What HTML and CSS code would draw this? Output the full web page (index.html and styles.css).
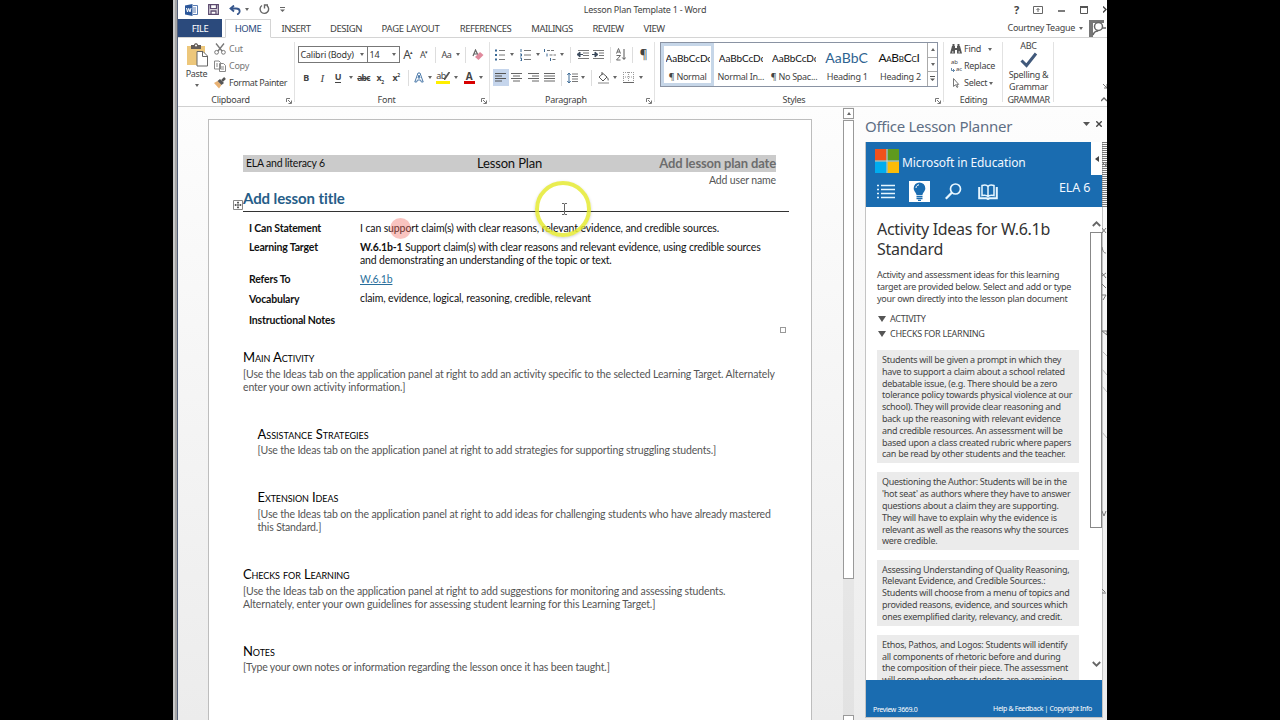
FILE: index.html
```html
<!DOCTYPE html>
<html lang="en">
<head>
  <meta charset="UTF-8">
  <title>Lesson Plan Template 1 - Word</title>
  <link rel="stylesheet" href="styles.css">
</head>
<body>
<div class="window">

  <!-- Title bar -->
  <div class="titlebar">
    <div class="quick">
      <svg width="13" height="12" viewBox="0 0 13 12"><path d="M0 1.5 7.5 0v12L0 10.5z" fill="#2b579a"/><path d="M1.5 4l1 4 1.2-3.6L5 8l1-4" fill="none" stroke="#fff"/><path d="M8 1.5h4.5v9H8M8 4h3M8 6h3M8 8h3" fill="none" stroke="#5a7db3"/></svg>
      <svg width="11" height="11" viewBox="0 0 11 11"><path d="M.7.7h9.6v9.6H.7zM2.5.7v4h6v-4M3 10V7h5v3" fill="none" stroke="#5b4a6e" stroke-width="1.3"/></svg>
      <svg width="12" height="10" viewBox="0 0 12 10"><path d="M5 .5 1.5 3.5 5 6.5M2 3.5h5c5 0 4.500 5 1 6" fill="none" stroke="#36568c" stroke-width="1.8"/></svg>
      <i class="caret"></i>
      <svg width="11" height="11" viewBox="0 0 11 11"><path d="M3 1.500a4.300 4.300 0 1 0 5 .2M5.500 4.500V1H9" fill="none" stroke="#666" stroke-width="1.400"/></svg>
      <svg width="5" height="6" viewBox="0 0 5 6"><path d="M0 .5h5" stroke="#666"/><path d="M0 2.500h5L2.500 5z" fill="#666"/></svg>
    </div>
    <div class="title">Lesson Plan Template 1 - Word</div>
    <div class="controls">
      <b>?</b>
      <svg width="10" height="8" viewBox="0 0 10 8"><path d="M.5.5h9v7h-9zM5 6V2.500M3.500 4 5 2.500 6.500 4" fill="none" stroke="#666"/></svg>
      <svg width="7" height="8" viewBox="0 0 7 8"><path d="M0 5h7" stroke="#444" stroke-width="1.400"/></svg>
      <svg width="8" height="8" viewBox="0 0 8 8"><path d="M.5.5h7v7h-7z" fill="none" stroke="#555"/><path d="M0 1h8" stroke="#555" stroke-width="2"/></svg>
      <svg width="4" height="7" viewBox="0 0 4 7"><path d="M0 .5 3 3.500 0 6.500" fill="none" stroke="#444" stroke-width="1.400"/></svg>
    </div>
  </div>

  <!-- Tabs -->
  <div class="tabs">
    <span class="file">FILE</span>
    <span class="active">HOME</span>
    <span>INSERT</span>
    <span>DESIGN</span>
    <span class="wide">PAGE LAYOUT</span>
    <span>REFERENCES</span>
    <span>MAILINGS</span>
    <span>REVIEW</span>
    <span>VIEW</span>
    <div class="user">Courtney Teague <i class="caret"></i>
      <svg width="18" height="17" viewBox="0 0 18 17"><path d="M0 0h15v3H4v14H0z" fill="#777"/><circle cx="9.500" cy="6.500" r="4" fill="#fff" stroke="#666" stroke-width="1.500"/><path d="M4 15c1-3 2-4 5-4M13 8h4" fill="none" stroke="#666" stroke-width="1.500"/></svg>
    </div>
  </div>

  <!-- Ribbon -->
  <div class="ribbon">
    <div class="group clipboard">
      <div class="group-body">
        <div class="paste">
          <svg width="22" height="24" viewBox="0 0 22 24"><path d="M1 3h18v19H1z" fill="#edc77b"/><path d="M5 2h3c0-2.500 4-2.500 4 0h3v4H5z" fill="#635c58"/><circle cx="10" cy="2.500" r="1" fill="#fff"/><path d="M11 8.500h6l4.500 4.500v10H11z" fill="#fff" stroke="#666"/><path d="M16.500 9v4.500H21" fill="none" stroke="#666"/></svg>
          <span>Paste</span>
          <i class="caret"></i>
        </div>
        <div class="clip-list">
          <div class="dim"><svg width="12" height="12" viewBox="0 0 12 12"><path d="M2 .5 8 8M10 .5 4 8" stroke="#777" stroke-width="1.300"/><circle cx="2.600" cy="9.300" r="1.900" fill="none" stroke="#777"/><circle cx="9.400" cy="9.300" r="1.900" fill="none" stroke="#777"/></svg>Cut</div>
          <div class="dim"><svg width="12" height="12" viewBox="0 0 12 12"><path d="M.5 1h4.500l1.500 1.500V9H.5zM5.500 3.500h4l2 2V11.500h-6zM2 4h2M2 6h2M7 7h3M7 9h3" fill="#fff" stroke="#888"/></svg>Copy</div>
          <div class="painter"><svg width="12" height="12" viewBox="0 0 12 12"><path d="M0 6 3.500 4l4 4L5 11.500z" fill="#e8b172"/><path d="M3.500 4 6 2l4 4-2.500 2z" fill="#555"/><path d="M8 4l3-3" stroke="#555" stroke-width="2.500"/></svg>Format Painter</div>
        </div>
      </div>
      <div class="label">Clipboard<svg class="launch" width="6" height="6" viewBox="0 0 6 6"><path d="M.5 4V.5H4M2 2l3 3M5.500 2.500v3h-3" fill="none" stroke="#777"/></svg></div>
    </div>

    <div class="group font">
      <div class="group-body rows">
        <div class="cells font-top">
          <div class="combo">Calibri (Body)<i class="caret"></i></div>
          <div class="combo">14<i class="caret"></i></div>
          <span class="big">A<sup>▴</sup></span>
          <span>A<sup>▾</sup></span>
          <i class="bar"></i>
          <span>Aa</span>
          <i class="caret"></i>
          <i class="bar"></i>
          <svg width="12" height="12" viewBox="0 0 12 12"><path d="M1 7 3.500 1 6 6M2 5h3" fill="none" stroke="#666" stroke-width="1.200"/><path d="M3 8 8 3l3.500 3L6.500 11z" fill="#e08a9d"/></svg>
        </div>
        <div class="cells font-bottom">
          <b>B</b>
          <i class="serif">I</i>
          <b class="under">U</b>
          <i class="caret"></i>
          <b class="strike">abc</b>
          <b>x<sub>2</sub></b>
          <b>x<sup>2</sup></b>
          <i class="bar"></i>
          <svg width="10" height="11" viewBox="0 0 10 11"><path d="M.8 10 4 1h2l3.200 9H7.300l-.7-2H3.400l-.7 2zM4 6h2L5 3z" fill="#fff" stroke="#4a78a8"/></svg>
          <i class="caret"></i>
          <span class="mark">ab<svg width="6" height="8" viewBox="0 0 6 8"><path d="M0 8 5.500 0" stroke="#555" stroke-width="1.800"/></svg></span>
          <i class="caret"></i>
          <b class="ink">A</b>
          <i class="caret"></i>
        </div>
      </div>
      <div class="label">Font<svg class="launch" width="6" height="6" viewBox="0 0 6 6"><path d="M.5 4V.5H4M2 2l3 3M5.500 2.500v3h-3" fill="none" stroke="#777"/></svg></div>
    </div>

    <div class="group para">
      <div class="group-body rows">
        <div class="cells para-top">
          <svg width="10" height="12" viewBox="0 0 10 12"><path d="M0 1.500h2M0 6h2M0 10.500h2" stroke="#3c6a96" stroke-width="2"/><path d="M4 1.500h6M4 6h6M4 10.500h6" stroke="#777"/></svg>
          <i class="caret"></i>
          <svg width="11" height="12" viewBox="0 0 11 12"><path d="M1 0v3M0 5h1.500v2H0M0 9h1.500v3H0" fill="none" stroke="#3c6a96"/><path d="M4 1.500h7M4 6h7M4 10.500h7" stroke="#777"/></svg>
          <i class="caret"></i>
          <svg width="13" height="12" viewBox="0 0 13 12"><path d="M.5 0v3M3 4.500v3M6.500 9v3" stroke="#3c6a96"/><path d="M3 1.500h8M5.500 6H12M8.500 10.500H12" stroke="#777" stroke-dasharray="3 1"/></svg>
          <i class="caret"></i>
          <i class="bar"></i>
          <svg width="12" height="9" viewBox="0 0 12 9"><path d="M1 .5h11M6 3h6M6 5.500h6M1 8.500h11" stroke="#777"/><path d="M0 4.500 3 2v5zM2 4.500h4" fill="#3b4a5c" stroke="#3b4a5c"/></svg>
          <svg width="12" height="9" viewBox="0 0 12 9"><path d="M1 .5h11M7 3h5M7 5.500h5M1 8.500h11" stroke="#777"/><path d="M6 4.500 3 2v5zM0 4.500h4" fill="#3b4a5c" stroke="#3b4a5c"/></svg>
          <i class="bar"></i>
          <svg width="10" height="13" viewBox="0 0 10 13"><path d="M.5 5.500 2.500.5l2 5M1.200 4h2.600M.5 7.500h4l-4 4.500h4" fill="none" stroke="#666"/><path d="M8 1v10M6.300 9.500 8 11.500l1.700-2" fill="none" stroke="#555"/></svg>
          <i class="bar"></i>
          <span class="big">¶</span>
        </div>
        <div class="cells para-bottom">
          <i class="on"><svg width="11" height="9" viewBox="0 0 11 9"><path d="M0 .5h11M0 3h7M0 5.500h11M0 8h7" stroke="#555"/></svg></i>
          <svg width="11" height="9" viewBox="0 0 11 9"><path d="M0 .5h11M2 3h7M0 5.500h11M2 8h7" stroke="#666"/></svg>
          <svg width="11" height="9" viewBox="0 0 11 9"><path d="M0 .5h11M4 3h7M0 5.500h11M4 8h7" stroke="#666"/></svg>
          <svg width="11" height="9" viewBox="0 0 11 9"><path d="M0 .5h11M0 3h11M0 5.500h11M0 8h11" stroke="#666"/></svg>
          <i class="bar"></i>
          <svg width="11" height="12" viewBox="0 0 11 12"><path d="M2 1v10M.3 3 2 1l1.700 2M.3 9 2 11l1.700-2" fill="none" stroke="#3c6a96"/><path d="M5 2h6M5 4.500h6M5 7h6M5 9.500h6" stroke="#777"/></svg>
          <i class="caret"></i>
          <i class="bar"></i>
          <svg width="13" height="12" viewBox="0 0 13 12"><path d="M2 5 6 1.500 10 5 6 9zM5 0v3" fill="none" stroke="#555"/><path d="M10 5c2 1 2 3 1 4z" fill="#555"/><path d="M1 11h11" stroke="#888"/></svg>
          <i class="caret"></i>
          <svg width="11" height="11" viewBox="0 0 11 11"><path d="M.5 0v10M5.500 0v10M10.500 0v10M0 .5h11M0 5h11" stroke="#999" stroke-dasharray="1 1"/><path d="M0 10.500h11" stroke="#666"/></svg>
          <i class="caret"></i>
        </div>
      </div>
      <div class="label">Paragraph<svg class="launch" width="6" height="6" viewBox="0 0 6 6"><path d="M.5 4V.5H4M2 2l3 3M5.500 2.500v3h-3" fill="none" stroke="#777"/></svg></div>
    </div>

    <div class="group styles">
      <div class="group-body">
        <div class="gallery">
          <div class="style selected"><span class="sample">AaBbCcDc</span><span>¶ Normal</span></div>
          <div class="style"><span class="sample">AaBbCcDc</span><span>Normal In...</span></div>
          <div class="style"><span class="sample">AaBbCcDc</span><span>¶ No Spac...</span></div>
          <div class="style"><span class="sample h1">AaBbC</span><span>Heading 1</span></div>
          <div class="style"><span class="sample h2">AaBbCcI</span><span>Heading 2</span></div>
          <div class="gallery-scroll">
            <span><i class="caret up"></i></span>
            <span><i class="caret"></i></span>
            <span><svg width="5" height="6" viewBox="0 0 5 6"><path d="M0 .5h5" stroke="#555"/><path d="M0 2.500h5L2.500 5z" fill="#555"/></svg></span>
          </div>
        </div>
      </div>
      <div class="label">Styles<svg class="launch" width="6" height="6" viewBox="0 0 6 6"><path d="M.5 4V.5H4M2 2l3 3M5.500 2.500v3h-3" fill="none" stroke="#777"/></svg></div>
    </div>

    <div class="group editing">
      <div class="group-body">
        <div class="edit-list">
          <div><svg width="12" height="10" viewBox="0 0 12 10"><path d="M0 9.500 2 2h3v7.500zM7 9.500V2h3l2 7.500zM2.500 0h2v2h-2zM7.500 0h2v2h-2zM5 4h2v2H5z" fill="#555"/><path d="M2 8h1.500M8.500 8H10" stroke="#fff"/></svg>Find <i class="caret"></i></div>
          <div class="replace"><span class="swap"><span>ab</span><span><svg width="4" height="4" viewBox="0 0 4 4"><path d="M.5 0v2.500h3M2 1l1.500 1.500L2 4" fill="none" stroke="#3c6a96" stroke-width=".8"/></svg>ac</span></span>Replace</div>
          <div class="select"><svg width="12" height="10" viewBox="0 0 12 10"><path d="M3.500.5v8l2-1.800L7 9.500l1-.6-1.300-2.500h2z" fill="#fff" stroke="#777"/></svg>Select<i class="caret"></i></div>
        </div>
      </div>
      <div class="label">Editing</div>
    </div>

    <div class="group grammar">
      <div class="group-body">
        <div class="spell">
          <span>ABC</span>
          <svg width="18" height="16" viewBox="0 0 18 16"><path d="M1.500 8.500 6.500 13.500 16 1.500" fill="none" stroke="#41597b" stroke-width="3"/></svg>
          <span>Spelling &amp;<br>Grammar</span>
        </div>
      </div>
      <div class="label">GRAMMAR</div>
    </div>
    <div class="ribbon-end">
      <svg width="4" height="6" viewBox="0 0 4 6"><path d="M0 1l4 4M4 1v4H1" fill="none" stroke="#777"/></svg>
      <svg width="6" height="5" viewBox="0 0 6 5"><path d="M0 4 3 1l3 3" fill="none" stroke="#666" stroke-width="1.300"/></svg>
    </div>
  </div>

  <!-- Workspace -->
  <div class="workspace">
    <div class="canvas">
      <div class="page">
        <div class="page-head">
          <span class="subject">ELA and literacy 6</span>
          <span class="doc-name">Lesson Plan</span>
          <span class="doc-date">Add lesson plan date</span>
        </div>
        <div class="user-name">Add user name</div>
        <div class="lesson-title">Add lesson title
          <svg class="move" width="10" height="10" viewBox="0 0 10 10"><path d="M.5.5h9v9h-9z" fill="#fff" stroke="#888"/><path d="M5 1.500v7M1.500 5h7M4 2.500h2M4 7.500h2M2.500 4v2M7.500 4v2" stroke="#444" stroke-width=".8"/></svg>
        </div>
        <dl class="facts">
          <dt>I Can Statement</dt><dd class="loose">I can su<span class="click">pp</span>ort claim(s) with clear reasons, relevant evidence, and credible sources.</dd>
          <dt>Learning Target</dt><dd><b>W.6.1b-1</b> Support claim(s) with clear reasons and relevant evidence, using credible sources<br>and demonstrating an understanding of the topic or text.</dd>
          <dt>Refers To</dt><dd><a href="#">W.6.1b</a></dd>
          <dt>Vocabulary</dt><dd class="loose">claim, evidence, logical, reasoning, credible, relevant</dd>
          <dt class="last">Instructional Notes</dt><dd></dd>
        </dl>
        <div class="resize"></div>

        <section>
          <h2>Main Activity</h2>
          <p>[Use the Ideas tab on the application panel at right to add an activity specific to the selected Learning Target. Alternately<br>enter your own activity information.]</p>
        </section>
        <section class="indent assist">
          <h2>Assistance Strategies</h2>
          <p>[Use the Ideas tab on the application panel at right to add strategies for supporting struggling students.]</p>
        </section>
        <section class="indent">
          <h2>Extension Ideas</h2>
          <p>[Use the Ideas tab on the application panel at right to add ideas for challenging students who have already mastered<br>this Standard.]</p>
        </section>
        <section>
          <h2>Checks for Learning</h2>
          <p>[Use the Ideas tab on the application panel at right to add suggestions for monitoring and assessing students.<br>Alternately, enter your own guidelines for assessing student learning for this Learning Target.]</p>
        </section>
        <section class="notes">
          <h2>Notes</h2>
          <p>[Type your own notes or information regarding the lesson once it has been taught.]</p>
        </section>
      </div>
    </div>

    <div class="scrollbar">
      <span class="arrow"><i class="caret up"></i></span>
      <span class="thumb"></span>
      <span class="arrow end"></span>
    </div>

    <!-- Task pane -->
    <div class="pane">
      <div class="pane-title">
        <span>Office Lesson Planner</span>
        <svg width="7" height="4" viewBox="0 0 7 4"><path d="M0 0h7L3.500 4z" fill="#555"/></svg>
        <svg width="6" height="6" viewBox="0 0 6 6"><path d="M.3.3l5.400 5.400M5.700.3.300 5.700" stroke="#444" stroke-width="1.400"/></svg>
      </div>
      <div class="app">
        <header>
          <div class="brand">
            <svg width="24" height="24" viewBox="0 0 24 24"><path d="M0 0h11.500v11.500H0z" fill="#f1511b"/><path d="M12.500 0H24v11.500H12.500z" fill="#5f9a1e"/><path d="M0 12.500h11.500V24H0z" fill="#00adef"/><path d="M12.500 12.500H24V24H12.500z" fill="#fbbc09"/><path d="M12 0v24M0 12h24" stroke="#d8e4c8"/></svg>
            <span class="brand-name">Microsoft in Education</span>
            <span class="fold"><svg width="4" height="6" viewBox="0 0 4 6"><path d="M4 0v6L0 3z" fill="#444"/></svg></span>
          </div>
          <div class="nav">
            <svg width="18" height="15" viewBox="0 0 18 15"><path d="M0 1.500h2M0 5.500h2M0 9.500h2M0 13.500h2M4 1.500h14M4 5.500h14M4 9.500h14M4 13.500h14" stroke="#e6f6ff" stroke-width="1.600"/></svg>
            <svg class="bulb" width="21" height="21" viewBox="0 0 21 21"><path d="M0 0h21v21H0z" fill="#fff"/><path d="M7.500 14c0-2.500-2.800-3.500-2.800-6.800a5.800 5.800 0 0 1 11.600 0c0 3.300-2.800 4.300-2.800 6.800z" fill="#1a6cb0"/><path d="M7.500 15.500h6M7.500 17.500h6M9 19.300h3" stroke="#1a6cb0" stroke-width="1.300"/><path d="M7 7c0-2 1.500-3 3-3.200" fill="none" stroke="#fff"/></svg>
            <svg width="17" height="17" viewBox="0 0 17 17"><circle cx="10.500" cy="6" r="5" fill="none" stroke="#e6f6ff" stroke-width="1.700"/><path d="M7 9.500.8 15.800" stroke="#e6f6ff" stroke-width="2.300"/></svg>
            <svg width="20" height="16" viewBox="0 0 20 16"><path d="M4 11.500V1.500C6.500.6 9 1 10 2.500 11 1 13.500.6 16 1.500v10c-2.500-.5-5-.3-6 1.200-1-1.500-3.500-1.700-6-1.200zM10 2.500v10" fill="none" stroke="#e6f6ff" stroke-width="1.500"/><path d="M1.200 3v11.300h7.300l1.500.7 1.500-.7h7.300V3" fill="none" stroke="#e6f6ff" stroke-width="2"/></svg>
            <span>ELA 6</span>
          </div>
        </header>
        <div class="app-body">
          <div class="content">
            <h1>Activity Ideas for W.6.1b<br>Standard</h1>
            <p>Activity and assessment ideas for this learning<br>target are provided below. Select and add or type<br>your own directly into the lesson plan document</p>
            <div class="fold-head"><i></i>ACTIVITY</div>
            <div class="fold-head"><i></i>CHECKS FOR LEARNING</div>
            <div class="card">Students will be given a prompt in which they<br>have to support a claim about a school related<br>debatable issue, (e.g. There should be a zero<br>tolerance policy towards physical violence at our<br>school). They will provide clear reasoning and<br>back up the reasoning with relevant evidence<br>and credible resources. An assessment will be<br>based upon a class created rubric where papers<br>can be read by other students and the teacher.</div>
            <div class="card">Questioning the Author: Students will be in the<br>'hot seat' as authors where they have to answer<br>questions about a claim they are supporting.<br>They will have to explain why the evidence is<br>relevant as well as the reasons why the sources<br>were credible.</div>
            <div class="card">Assessing Understanding of Quality Reasoning,<br>Relevant Evidence, and Credible Sources.:<br>Students will choose from a menu of topics and<br>provided reasons, evidence, and sources which<br>ones exemplified clarity, relevancy, and credit.</div>
            <div class="card">Ethos, Pathos, and Logos: Students will identify<br>all components of rhetoric before and during<br>the composition of their piece. The assessment<br>will come when other students are examining</div>
          </div>
          <div class="app-scroll">
            <svg width="9" height="6" viewBox="0 0 9 6"><path d="M.8 5 4.500 1.300 8.200 5" fill="none" stroke="#666" stroke-width="1.800"/></svg>
            <span></span>
            <svg class="down" width="9" height="6" viewBox="0 0 9 6"><path d="M.8 1 4.500 4.700 8.200 1" fill="none" stroke="#666" stroke-width="1.800"/></svg>
          </div>
        </div>
        <footer><span>Preview 3669.0</span><span class="help">Help &amp; Feedback | Copyright Info</span></footer>
      </div>
    </div>
    <!-- sliver of the window behind -->
    <svg class="behind" width="5" height="613" viewBox="0 0 5 613"><path d="M2.500 35v65" stroke="#777" stroke-width="5" stroke-dasharray="1 1"/><path d="M0 55l4 4M4 55v4M0 121l4 5M4 121l-4 5M0 140c1 6 3 6 4 6M0 166l4 5M4 166l-4 3M0 177l4 4M0 188h4l-3 5M0 224h5v4z" fill="none" stroke="#777"/><path d="M0 244l5 5M0 262l5 6M0 279l5 6M0 325l5 6" stroke="#bbb"/><path d="M0 404l2 5 2-5M0 482l3 3M0 486h4" fill="none" stroke="#777"/></svg>
  </div>

  <!-- Pointer with highlight ring -->
  <div class="ring"><svg width="7" height="12" viewBox="0 0 7 12"><path d="M1 .5h2l.5.5.5-.5h2M1 11.500h2l.5-.5.5.5h2M3.500 1v10" fill="none" stroke="#666"/></svg></div>
</div>
</body>
</html>
```

FILE: styles.css
```css
* { box-sizing: border-box; }
body {
  margin: 0;
  height: 720px;
  overflow: hidden;
  background: #000;
  color: #444;
  font: 9px/12px "Noto Sans", sans-serif;
  letter-spacing: -0.28px;
}
svg { display: block; flex: none; }
i { font-style: normal; }

.window {
  position: relative;
  width: 934px;
  height: 720px;
  margin-left: 173px;
  padding-left: 5px;
  overflow: hidden;
  background: linear-gradient(90deg, #c8c8c8 2px, #a4a4a4 2px, #a4a4a4 4px, #55617a 4px, #55617a 5px, #fff 5px);
}

.caret {
  display: inline-block;
  flex: none;
  border: 2.5px solid transparent;
  border-top: 3px solid #666;
  border-bottom: 0;
}
.caret.up { border-top: 0; border-bottom: 3px solid #666; }

/* title bar */
.titlebar { display: flex; height: 19px; align-items: center; }
.quick { display: flex; align-items: center; width: 406.5px; padding-left: 7px; }
.quick svg + svg { margin-left: 10px; }
.quick .caret { margin: 0 10px 0 4px; }
.quick .caret + svg + svg { margin-left: 10px; }
.title { width: 429px; letter-spacing: -0.24px; }
.controls { display: flex; align-items: center; gap: 15px; padding-left: 2px; }
.controls b { width: 6px; margin-right: -2px; font-size: 11px; }

/* tabs */
.tabs { display: flex; height: 19px; border-bottom: 1px solid #d4d4d4; font-size: 9.5px; letter-spacing: -0.5px; }
.tabs > span { width: 50px; line-height: 19px; text-align: center; }
.tabs .file { width: 44px; margin-right: 3px; background: #2b4a7c; color: #fff; }
.tabs .active { width: 46px; height: 19px; border: 1px solid #d4d4d4; border-bottom-color: #fff; line-height: 18px; color: #2b4a7c; }
.tabs .wide { width: 79px; letter-spacing: -0.3px; }
.tabs span:nth-child(6) { width: 71px; }
.tabs span:nth-child(7) { width: 62px; }
.tabs span:nth-child(9) { width: 42px; }
.user { display: flex; align-items: center; margin-left: auto; font-size: 9px; letter-spacing: -0.28px; }
.user .caret { margin: 0 6px 0 4px; }

/* ribbon */
.ribbon { display: flex; height: 69px; border-bottom: 1px solid #d0d0d0; }
.group { position: relative; display: flex; flex-direction: column; }
.group::after { content: ""; position: absolute; right: 0; top: 4px; bottom: 4px; border-right: 1px solid #e2e2e2; }
.group-body { height: 56px; }
.label { position: relative; line-height: 12px; text-align: center; }
.launch { position: absolute; right: 3px; top: 4px; }
.clipboard { width: 117px; }
.clipboard .label { padding-right: 12px; }
.clipboard .group-body { display: flex; }
.paste { display: flex; flex-direction: column; align-items: center; width: 36px; padding: 5px 0 0 1px; }
.paste span { margin: 1px 0 4px; }
.clip-list { display: flex; flex-direction: column; gap: 5px; padding-top: 5px; }
.clip-list div { display: flex; align-items: center; gap: 3px; height: 12px; }
.clip-list .painter { letter-spacing: -0.38px; }
.dim { color: #777; }
.font { width: 195px; }
.font .label { padding-right: 12px; }
.rows { padding: 8px 0 0 3px; }
.cells { display: grid; align-items: center; justify-items: center; height: 17px; letter-spacing: -0.5px; white-space: nowrap; }
.cells + .cells { margin-top: 6px; }
.font-top { grid-template-columns: 69px 32px 18px 14px 9px 13px 9px 7px 18px; }
.font-bottom { grid-template-columns: 16px 16px 16px 10px 15px 18px 14px 10px 12px 10px 16px 10px 16px 8px; }
.combo { display: flex; align-items: center; justify-content: space-between; width: calc(100% + 1px); height: 17px; padding: 0 3px 0 2px; border: 1px solid #777; letter-spacing: -0.2px; color: #333; }
.big { font-size: 12px; }
.cells sup, .cells sub { font-size: 5px; line-height: 0; }
.bar { height: 16px; border-left: 1px solid #ddd; }
.serif { font: italic 11px "Liberation Serif", serif; }
.under { border-bottom: 1px solid #444; line-height: 10px; }
.strike { font-size: 8.5px; text-decoration: line-through; letter-spacing: -0.8px; }
.mark { display: flex; height: 12px; border-bottom: 3px solid #ffef00; line-height: 8px; }
.mark svg { margin-left: -2px; }
.ink { width: 11px; height: 12px; border-bottom: 3px solid #d80000; font-size: 10px; line-height: 9px; text-align: center; }
.para { width: 165px; }
.para .label { padding-right: 13px; }
.para .rows { padding-left: 2.5px; }
.para-top { grid-template-columns: 15px 9px 17px 8px 18px 5px 12px 12px 19px 5px 17px 5px 18px; }
.para-bottom { grid-template-columns: 16px 16px 17px 16px 7px 15px 7px 10px 13px 11px 15px 10px; }
.on { display: grid; place-items: center; width: 16px; height: 17px; background: #c5d5ec; }
.styles { width: 289px; }
.styles .label { padding-right: 11px; }
.gallery { display: flex; width: 278px; height: 45px; margin: 4px 0 0 5px; border: 1px solid #8a93a3; }
.style { display: flex; flex-direction: column; align-items: center; justify-content: space-between; width: 53.4px; padding: 8px 2px 3px; white-space: nowrap; }
.style.selected { padding: 5px 0 0; border: 3px solid #c6d6e8; }
.sample { width: 44px; overflow: hidden; color: #111; font: 10px/14px Lato, sans-serif; letter-spacing: -0.1px; }
.sample.h1 { color: #2e6391; font-size: 14px; letter-spacing: 0.1px; }
.sample.h2 { font-size: 12px; font-variant: small-caps; letter-spacing: -0.3px; }
.gallery-scroll { display: flex; flex-direction: column; width: 10px; border-left: 1px solid #aaa; }
.gallery-scroll span { display: grid; flex: 1; place-items: center; }
.gallery-scroll span + span { border-top: 1px solid #aaa; }
.editing { width: 59px; }
.edit-list { display: flex; flex-direction: column; gap: 5px; padding: 5px 0 0 6px; }
.edit-list div { display: flex; align-items: center; gap: 2px; height: 12px; }
.edit-list .caret { margin-left: 5px; }
.select .caret { margin-left: 0; }
.swap { width: 12px; font-size: 6px; line-height: 7px; letter-spacing: -0.2px; }
.swap span { display: flex; align-items: center; gap: 1px; padding-left: 1px; }
.grammar { width: 51px; text-align: center; }
.grammar .label { letter-spacing: -0.5px; }
.spell { display: flex; flex-direction: column; align-items: center; padding-top: 2px; }
.spell svg { margin-bottom: 1px; }
.ribbon-end { display: flex; flex: 1; flex-direction: column; align-items: flex-end; gap: 8px; padding-top: 45px; }

/* workspace */
.workspace { display: flex; height: 613px; background: linear-gradient(#fdfdfd, #ececec); }
.canvas { width: 665px; padding: 12px 0 0 30px; overflow: hidden; }
.page {
  position: relative;
  width: 604px;
  height: 620px;
  padding: 35px 0 0 34px;
  border: 1px solid #bdbdbd;
  background: #fff;
  color: #111;
  font: 10.5px/13px Lato, sans-serif;
  letter-spacing: -0.15px;
}
.page-head { display: grid; grid-template-columns: 1fr auto 1fr; width: 533px; height: 17px; background: #cbcbcb; line-height: 17px; }
.subject { padding-left: 3px; letter-spacing: -0.22px; }
.doc-name { font-size: 13px; }
.doc-date { text-align: right; color: #6d6d6d; font-size: 13px; font-weight: 700; }
.user-name { width: 533px; margin-top: 2px; text-align: right; color: #555; }
.lesson-title { position: relative; width: 546px; height: 25px; border-bottom: 1px solid #333; color: #265d88; font-size: 15px; font-weight: 700; line-height: 22px; letter-spacing: -0.1px; }
.move { position: absolute; left: -10px; bottom: 1px; }
.facts { display: grid; grid-template-columns: 111px 1fr; row-gap: 6px; margin: 10px 0 0 6px; }
.facts dt { font-weight: 700; letter-spacing: -0.18px; }
.facts dt:nth-of-type(4) { margin-top: 0.5px; }
.facts .last { margin-top: 2px; }
.facts dd { margin: 0; white-space: nowrap; }
.facts .loose { letter-spacing: -0.12px; }
.facts a { color: #2a6f9c; }
.click { position: relative; }
.click::before { content: ""; position: absolute; left: -4px; top: -4px; width: 21px; height: 21px; border-radius: 50%; background: rgba(240, 100, 90, 0.38); }
.resize { width: 6px; height: 6px; margin-left: 537px; border: 1px solid #999; }
section { height: 77px; white-space: nowrap; }
.resize + section { margin-top: 16.5px; }
section h2 { margin: 0; color: #000; font-size: 13px; font-variant: small-caps; font-weight: 400; line-height: 16px; letter-spacing: -0.1px; }
section p { margin: 3px 0 0; color: #555; }
.indent { padding-left: 14.5px; }
.assist { height: 62.5px; }
.assist h2 { letter-spacing: 0; }
.assist p { margin-top: 1.500px; }
.notes p { margin-top: 2px; }

.scrollbar { display: flex; flex-direction: column; width: 11px; margin-right: 11px; padding-top: 1px; background: linear-gradient(#f4f4f4, #e2e2e2); }
.arrow { display: grid; flex: none; place-items: center; height: 11px; border: 1px solid #999; background: #fff; }
.thumb { height: 459px; margin-top: 1px; border: 1px solid #999; background: #fff; }
.arrow.end { margin-top: auto; height: 5px; border-bottom: 0; }
.canvas { flex: none; }
.scrollbar { flex: none; margin-left: 0; }

/* task pane */
.pane { flex: none; width: 238px; padding-bottom: 2px; }
.pane-title { display: flex; align-items: center; height: 35px; padding-top: 2px; color: #5f6f85; font-size: 15px; letter-spacing: -0.28px; }
.pane-title span { width: 218px; }
.pane-title svg { margin-top: -4px; }
.pane-title svg + svg { margin-left: 6px; }
.app { display: flex; flex-direction: column; width: 238px; height: 576px; border: 1px solid #c4c4c4; border-top: 0; background: #fff; }
.app header { height: 65px; background: #1a6cb0; color: #f2f8ff; font-size: 12px; letter-spacing: -0.11px; }
.brand { position: relative; display: flex; align-items: center; gap: 3px; height: 35px; padding: 2px 0 0 9px; }
.brand-name { margin-top: 4px; }
.fold { position: absolute; right: 0; top: 0; display: grid; place-items: center; width: 11px; height: 33px; background: #fff; }
.nav { display: flex; align-items: center; height: 29px; padding-left: 11px; }
.nav .bulb { margin: 0 15px 0 14px; }
.nav svg:nth-child(4) { margin-left: 16px; }
.nav span { margin: -8px 0 0 61px; font-size: 12.5px; }
.app-body { display: flex; height: 473px; overflow: hidden; }
.content { width: 224px; padding-left: 11px; }
.content h1 { margin: 13px 0 10px; color: #333; font-size: 16px; font-weight: 400; line-height: 19.5px; letter-spacing: -0.28px; white-space: nowrap; }
.content p { margin: 0 0 7px; line-height: 12px; white-space: nowrap; }
.fold-head { display: flex; align-items: center; gap: 4px; height: 14.5px; padding-left: 1px; }
.fold-head i { border: 4px solid transparent; border-top: 6px solid #555; border-bottom: 0; }
.card { width: 202px; padding: 4px 0 3px 5px; background: #ebebeb; line-height: 11.8px; white-space: nowrap; }
.fold-head + .card { margin-top: 9px; }
.card + .card { margin-top: 9.3px; }
.app-scroll { display: flex; flex-direction: column; align-items: center; width: 12px; padding-top: 14px; }
.app-scroll span { flex: none; width: 12px; height: 296px; margin-top: 5px; border: 1px solid #888; }
.app-scroll .down { margin-top: 133px; }
.app footer { display: flex; align-items: center; flex: 1; padding: 23px 10px 0 7px; background: #1a6cb0; color: #fff; font-size: 7px; letter-spacing: -0.35px; }
.help { margin: -3px 0 0 auto; }
.behind { margin-left: -1px; }

.ring { position: absolute; left: 362px; top: 181px; display: grid; place-items: center; width: 56px; height: 56px; padding-left: 2px; border: 4px solid rgba(229, 234, 50, 0.85); border-radius: 50%; box-shadow: 0 1px 3px rgba(0, 0, 0, 0.2); }
```
